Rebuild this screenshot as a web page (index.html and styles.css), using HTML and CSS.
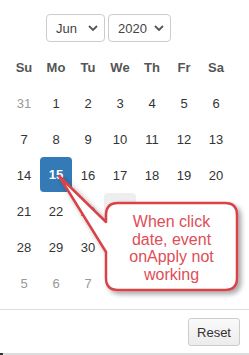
FILE: index.html
```html
<!DOCTYPE html>
<html lang="en">
<head>
    <meta charset="UTF-8">
    <title>Date picker</title>
    <link rel="stylesheet" href="styles.css">
</head>
<body>
    <div class="picker">
        <div class="picker-head">
            <div class="select-wrap month">
                <select class="picker-select"><option>Jun</option></select>
                <svg class="chevron" width="10" height="6" viewBox="0 0 10 6"><polyline points="1 1 5 5 9 1" fill="none" stroke="#555" stroke-width="1.8"/></svg>
            </div>
            <div class="select-wrap year">
                <select class="picker-select"><option>2020</option></select>
                <svg class="chevron" width="10" height="6" viewBox="0 0 10 6"><polyline points="1 1 5 5 9 1" fill="none" stroke="#555" stroke-width="1.8"/></svg>
            </div>
        </div>

        <div class="days">
            <div class="dow">Su</div><div class="dow">Mo</div><div class="dow">Tu</div><div class="dow">We</div><div class="dow">Th</div><div class="dow">Fr</div><div class="dow">Sa</div>

            <div class="day off">31</div><div class="day">1</div><div class="day">2</div><div class="day">3</div><div class="day">4</div><div class="day">5</div><div class="day">6</div>
            <div class="day">7</div><div class="day">8</div><div class="day">9</div><div class="day">10</div><div class="day">11</div><div class="day">12</div><div class="day">13</div>
            <div class="day">14</div><div class="day active">15</div><div class="day">16</div><div class="day">17</div><div class="day">18</div><div class="day">19</div><div class="day">20</div>
            <!-- cells under the callout are left blank -->
            <div class="day">21</div><div class="day">22</div><div class="day">23</div><div class="day hover"></div><div class="day"></div><div class="day"></div><div class="day"></div>
            <div class="day">28</div><div class="day">29</div><div class="day">30</div><div class="day off"></div><div class="day off"></div><div class="day off"></div><div class="day off"></div>
            <div class="day off">5</div><div class="day off">6</div><div class="day off">7</div><div class="day off"></div><div class="day off"></div><div class="day off"></div><div class="day off"></div>
        </div>

        <div class="picker-foot">
            <button class="reset-btn">Reset</button>
        </div>
    </div>
    <div class="bottom-edge"></div>

    <svg class="callout-shape" width="249" height="355" viewBox="0 0 249 355">
        <defs>
            <filter id="shadow" x="-20%" y="-20%" width="150%" height="150%">
                <feDropShadow dx="3" dy="3" stdDeviation="2.5" flood-color="#000" flood-opacity="0.35"/>
            </filter>
        </defs>
        <path d="M118 203 H225 Q237 203 237 215 V278 Q237 290 225 290 H118 Q106 290 106 278 V252 L59 176 L106 222 V215 Q106 203 118 203 Z"
              fill="#fff" stroke="#d8434a" stroke-width="2.5" stroke-linejoin="round" filter="url(#shadow)"/>
    </svg>
    <div class="callout-text">When click<br>date, event<br>onApply not<br>working</div>
</body>
</html>
```

FILE: styles.css
```css
* {
    margin: 0;
    padding: 0;
    box-sizing: border-box;
}

body {
    width: 249px;
    height: 355px;
    overflow: hidden;
    background: #fff;
    font-family: 'Liberation Sans', Arial, sans-serif;
    font-size: 13px;
    color: #333;
    position: relative;
}

.picker {
    display: flex;
    flex-direction: column;
}

.picker-head {
    display: flex;
    gap: 3px;
    padding: 14px 0 0 46px;
}

.select-wrap {
    position: relative;
    height: 28px;
}

.select-wrap.month {
    width: 59px;
}

.select-wrap.year {
    width: 63px;
}

.picker-select {
    appearance: none;
    -webkit-appearance: none;
    width: 100%;
    height: 100%;
    border: 1px solid #ccc;
    border-radius: 4px;
    background: #fff;
    font-family: 'Liberation Sans', Arial, sans-serif;
    font-size: 13px;
    color: #444;
    padding-left: 9px;
}

.chevron {
    position: absolute;
    right: 7px;
    top: 11px;
    pointer-events: none;
}

.days {
    display: grid;
    grid-template-columns: repeat(7, 32px);
    grid-auto-rows: 36px;
    margin: 7px 0 0 8px;
}

.dow,
.day {
    display: flex;
    align-items: center;
    justify-content: center;
}

.dow {
    font-weight: bold;
    color: #555;
}

.day {
    color: #333;
    border-radius: 4px;
}

.day.off {
    color: #999;
}

.day.hover {
    background: #eee;
}

.day.active {
    background: #337ab7;
    color: #fff;
    font-weight: bold;
    height: 35px;
}

.picker-foot {
    margin-top: 8px;
    border-top: 1px solid #ddd;
    padding: 8px 9px 0 0;
    display: flex;
    justify-content: flex-end;
}

.reset-btn {
    width: 52px;
    height: 28px;
    border: 1px solid #ccc;
    border-radius: 3px;
    background: linear-gradient(#fafafa, #ececec);
    font-family: 'Liberation Sans', Arial, sans-serif;
    font-size: 13px;
    color: #333;
}

.bottom-edge {
    position: absolute;
    left: 0;
    bottom: 0;
    width: 249px;
    height: 2px;
    background: #ddd;
    border-left: 3px solid #333;
}

.callout-shape {
    position: absolute;
    left: 0;
    top: 0;
    pointer-events: none;
}

.callout-text {
    position: absolute;
    left: 106px;
    top: 213px;
    width: 131px;
    text-align: center;
    font-size: 16px;
    line-height: 17.6px;
    color: #df4d57;
}
```
